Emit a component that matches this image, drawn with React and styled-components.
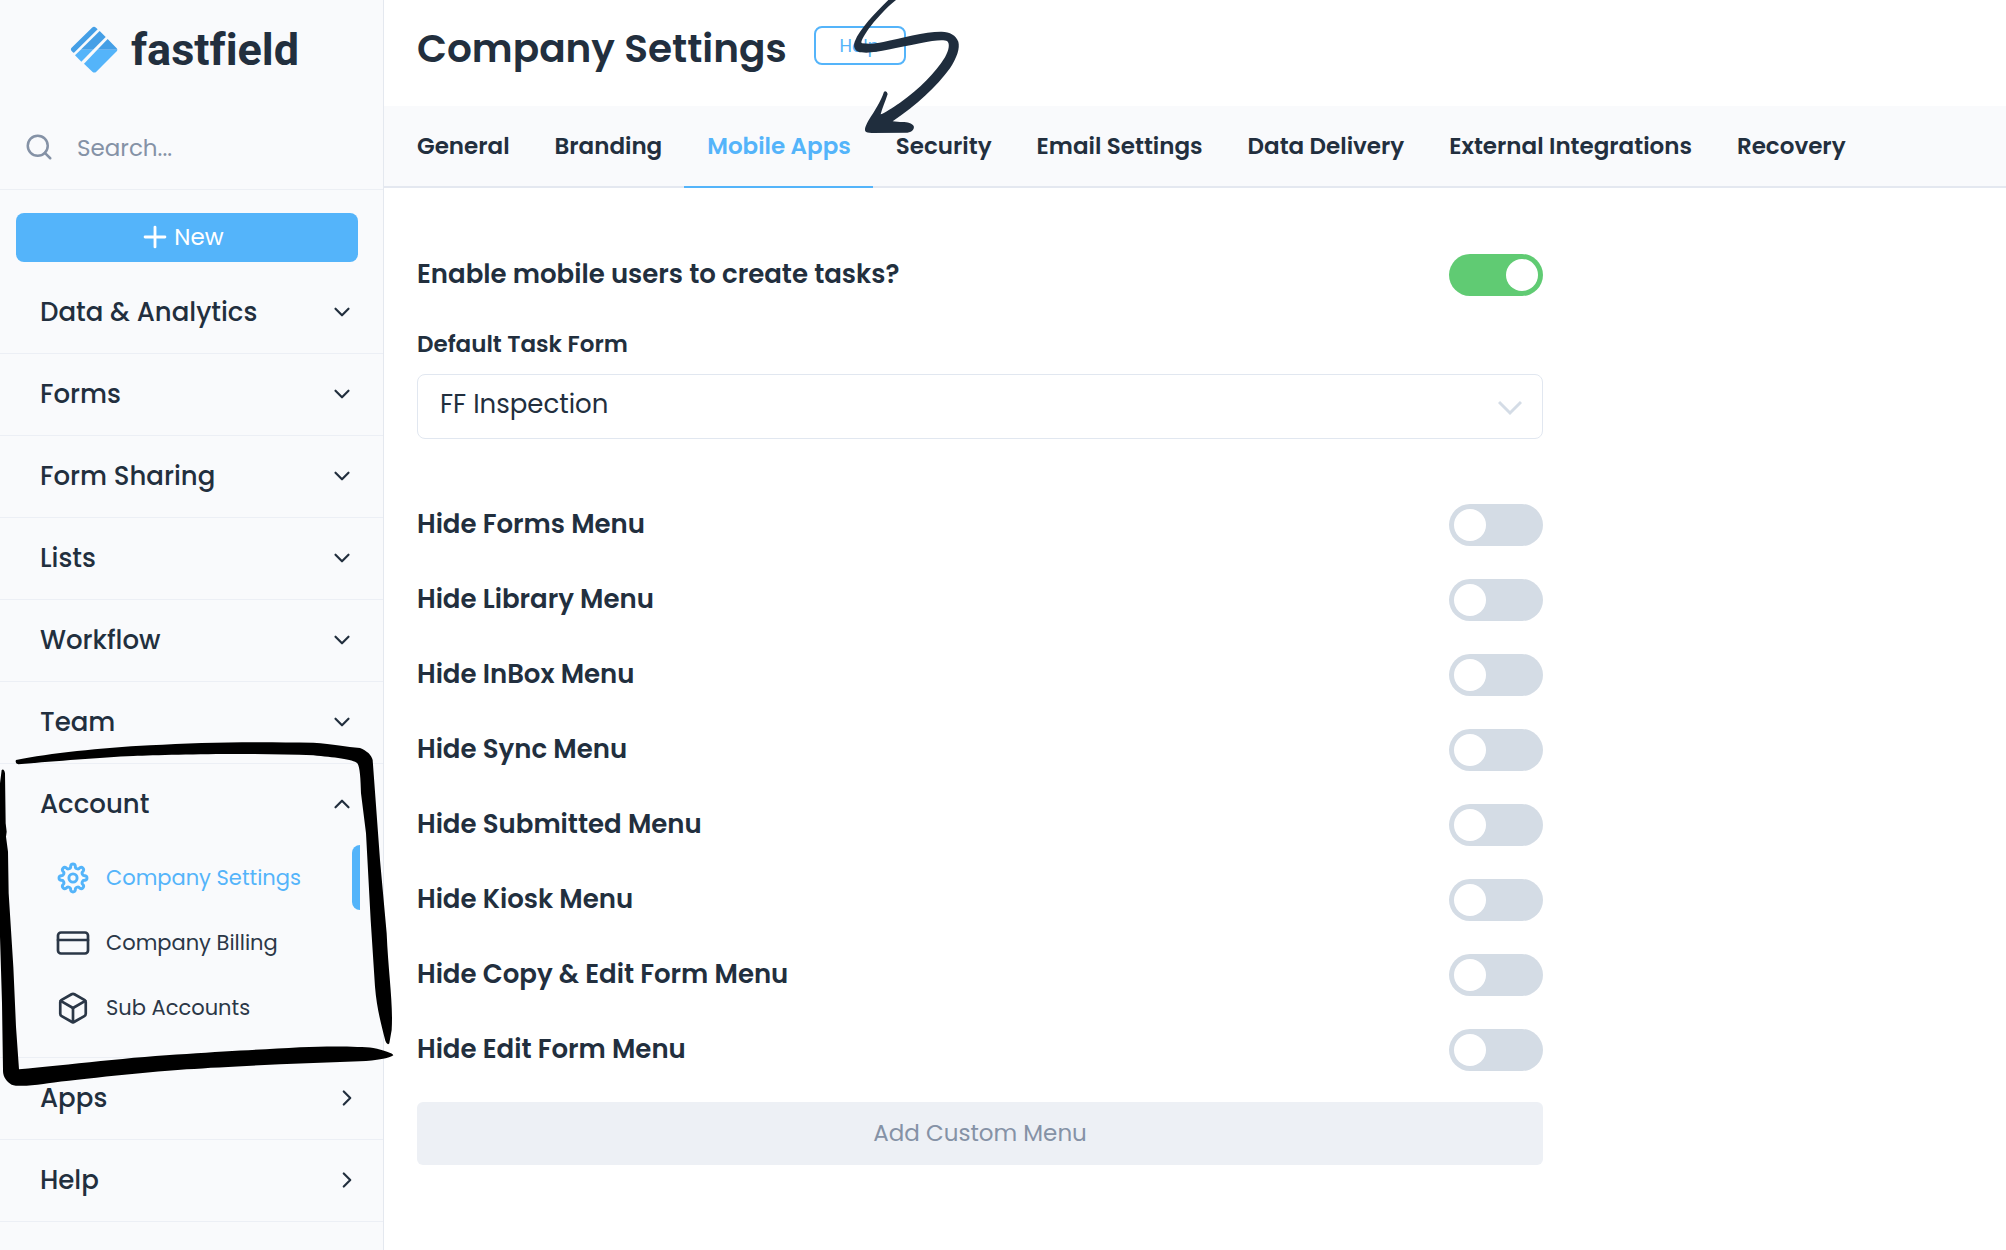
import React, { useState } from "react";
import styled, { createGlobalStyle } from "styled-components";
import {
  Box,
  ChevronDown,
  ChevronRight,
  ChevronUp,
  CreditCard,
  Plus,
  Search,
} from "lucide-react";

const GlobalStyle = createGlobalStyle`
  * {
    box-sizing: border-box;
  }

  body {
    margin: 0;
    background: #ffffff;
    color: #222f3e;
    font-family: Poppins, Inter, sans-serif;
  }

  button, input, select {
    font-family: inherit;
    color: inherit;
  }
`;

const Layout = styled.div`
  display: flex;
  min-height: 100vh;
`;

const Sidebar = styled.aside`
  flex: 0 0 384px;
  min-width: 0;
  background: #f9fafc;
  border-right: 1px solid #e4e8ef;
`;

const Logo = styled.a`
  display: flex;
  align-items: center;
  gap: 13px;
  height: 100px;
  padding-left: 70px;
  color: #222f3e;
  text-decoration: none;
`;

const LogoText = styled.span`
  font-family: Roboto, sans-serif;
  font-size: 45px;
  line-height: 56px;
  font-weight: 700;
  font-variant-ligatures: none;
`;

const SearchBar = styled.label`
  display: flex;
  align-items: center;
  gap: 23px;
  height: 90px;
  padding: 4px 24px 0;
  border-bottom: 1px solid #eceff4;
  color: #8592a6;

  svg {
    flex: none;
  }
`;

const SearchInput = styled.input`
  width: 100%;
  min-width: 0;
  padding: 2px 0 0;
  border: none;
  outline: none;
  background: transparent;
  font-size: 23px;

  &::placeholder {
    color: #8592a6;
    opacity: 1;
  }
`;

const NewButton = styled.button`
  display: flex;
  align-items: center;
  justify-content: center;
  gap: 2px;
  width: 342px;
  height: 49px;
  margin: 23px 16px 10px;
  padding: 0 12px 1px 0;
  border: none;
  border-radius: 8px;
  background: #54b4fa;
  color: #ffffff;
  font-size: 23px;
`;

const Section = styled.section`
  position: relative;
  border-bottom: 1px solid #eceff5;
  padding-bottom: ${(props) => (props.$open ? "17px" : "0")};
`;

const SectionButton = styled.button`
  display: flex;
  align-items: center;
  justify-content: space-between;
  width: 100%;
  height: 81px;
  padding: 0 ${(props) => (props.$closed ? "23px" : "28px")} 1px 40px;
  border: none;
  background: transparent;
  font-size: 26px;
  font-weight: 500;
`;

const SubItem = styled.a`
  display: flex;
  align-items: center;
  gap: 15px;
  height: 65px;
  margin-right: 23px;
  padding-left: 55px;
  color: ${(props) => (props.$active ? "#54b4fa" : "#2b3747")};
  font-size: 21px;
  text-decoration: none;
`;

const IconBox = styled.span`
  display: flex;
  justify-content: center;
  width: 36px;
`;

const ActiveBar = styled.span`
  width: 8px;
  height: 65px;
  margin-left: auto;
  border-radius: 8px 0 0 8px;
  background: #54b4fa;
`;

const BoxSketch = styled.svg`
  position: absolute;
  top: -44px;
  left: 0;
  pointer-events: none;
`;

const Main = styled.main`
  flex: 1;
  min-width: 0;
`;

const Header = styled.header`
  display: flex;
  align-items: center;
  gap: 27px;
  height: 106px;
  padding: 0 33px 8px;
`;

const Title = styled.h1`
  margin: 0;
  font-size: 39px;
  line-height: 60px;
  font-weight: 600;
`;

const HelpWrapper = styled.div`
  position: relative;
  margin-bottom: 7px;
`;

const HelpButton = styled.button`
  display: block;
  width: 92px;
  height: 39px;
  border: 2px solid #54b4fa;
  border-radius: 8px;
  background: #ffffff;
  color: #54b4fa;
  font-size: 18px;
`;

const ArrowSketch = styled.svg`
  position: absolute;
  top: -26px;
  left: 6px;
  pointer-events: none;
`;

const Tabs = styled.nav`
  display: flex;
  height: 82px;
  padding: 0 10px;
  background: #f9fafc;
  box-shadow: inset 0 -2px #e4e8f0;
`;

const Tab = styled.a`
  display: flex;
  align-items: center;
  padding: 0 22px 0 23px;
  border-bottom: 2px solid ${(props) => (props.$active ? "#54b4fa" : "transparent")};
  color: ${(props) => (props.$active ? "#54b4fa" : "#222f3e")};
  font-size: 23px;
  font-weight: 600;
  text-decoration: none;
  white-space: nowrap;
`;

const Form = styled.form`
  max-width: 1192px;
  padding: 49px 33px;
`;

const ToggleRow = styled.label`
  display: flex;
  align-items: center;
  justify-content: space-between;
  height: 75px;
  font-size: 26px;
  font-weight: 600;
`;

const Toggle = styled.input`
  appearance: none;
  width: 94px;
  height: 42px;
  margin: 0;
  border-radius: 21px;
  background: #d4dce5;

  &::before {
    content: "";
    display: block;
    width: 32px;
    height: 32px;
    margin: 5px;
    border-radius: 50%;
    background: #ffffff;
  }

  &:checked {
    background: #60cb73;
  }

  &:checked::before {
    margin-left: 57px;
  }
`;

const FieldLabel = styled.label`
  display: block;
  padding: 17px 0 15px;
  font-size: 23px;
  line-height: 30px;
  font-weight: 600;
`;

const SelectWrapper = styled.div`
  position: relative;
  margin-bottom: 48px;
`;

const Select = styled.select`
  appearance: none;
  display: block;
  width: 100%;
  height: 65px;
  padding: 0 60px 6px 22px;
  border: 1px solid #e1e7f0;
  border-radius: 8px;
  background: #ffffff;
  font-size: 26px;
`;

const SelectArrow = styled.svg`
  position: absolute;
  top: 26px;
  right: 21px;
  pointer-events: none;
`;

const AddButton = styled.button`
  width: 100%;
  height: 63px;
  margin-top: 15px;
  padding-bottom: 3px;
  border: none;
  border-radius: 6px;
  background: #edf0f5;
  color: #8592a6;
  font-size: 23px;
`;

const sections = ["Data & Analytics", "Forms", "Form Sharing", "Lists", "Workflow", "Team"];

const tabs = [
  "General",
  "Branding",
  "Mobile Apps",
  "Security",
  "Email Settings",
  "Data Delivery",
  "External Integrations",
  "Recovery",
];

const menus = [
  "Hide Forms Menu",
  "Hide Library Menu",
  "Hide InBox Menu",
  "Hide Sync Menu",
  "Hide Submitted Menu",
  "Hide Kiosk Menu",
  "Hide Copy & Edit Form Menu",
  "Hide Edit Form Menu",
];

// eight round teeth, joined by round valleys
const point = (deg) => {
  const rad = (deg * Math.PI) / 180;
  return `${(17 + 12.3 * Math.sin(rad)).toFixed(2)} ${(17 - 12.3 * Math.cos(rad)).toFixed(2)}`;
};

const gearPath =
  `M${point(-11)}` +
  [0, 45, 90, 135, 180, 225, 270, 315]
    .map((a) => `A2.4 2.4 0 0 1 ${point(a + 11)}A2.5 2.5 0 0 0 ${point(a + 34)}`)
    .join("") +
  "Z";

const GearIcon = () => (
  <svg width="34" height="34" viewBox="0 0 34 34" fill="none" stroke="currentColor" strokeWidth="2.9">
    <path d={gearPath} strokeLinejoin="round" />
    <circle cx="17" cy="17" r="4.1" />
  </svg>
);

const LogoIcon = () => (
  <svg width="48" height="48" viewBox="0 0 144 144">
    <path
      fill="#459fe6"
      d="M66 5Q72 0 78 5L83 10L12 80Q10 81 7 77L4 74Q1 70 4 66Z"
    />
    <path fill="#459fe6" d="M89 15L107 33L69 71H32Z" />
    <path fill="#54b4fa" d="M32 71H69L34 107L15 88Z" />
    <path fill="#459fe6" d="M113 39L140 67Q142 69 142 71H82Z" />
    <path fill="#54b4fa" d="M82 71H142Q142 73 140 76L79 137Q73 142 67 137L42 113Z" />
  </svg>
);

const App = () => {
  const [open, setOpen] = useState(true);
  const [canCreate, setCanCreate] = useState(true);
  const [hidden, setHidden] = useState({});

  return (
    <Layout>
      <GlobalStyle />
      <Sidebar>
        <Logo href="#">
          <LogoIcon />
          <LogoText>fastfield</LogoText>
        </Logo>
        <SearchBar>
          <Search size={30} strokeWidth={2} />
          <SearchInput placeholder="Search..." aria-label="Search" />
        </SearchBar>
        <NewButton>
          <Plus size={34} strokeWidth={2} />
          New
        </NewButton>
        {sections.map((name) => (
          <Section key={name}>
            <SectionButton>
              {name}
              <ChevronDown size={26} strokeWidth={2} />
            </SectionButton>
          </Section>
        ))}
        <Section $open={open}>
          <SectionButton onClick={() => setOpen(!open)}>
            Account
            <ChevronUp size={26} strokeWidth={2} />
          </SectionButton>
          {open && <>
            <SubItem href="#" $active>
              <IconBox>
                <GearIcon />
              </IconBox>
              Company Settings
              <ActiveBar />
            </SubItem>
            <SubItem href="#">
              <IconBox>
                <CreditCard size={36} strokeWidth={1.8} />
              </IconBox>
              Company Billing
            </SubItem>
            <SubItem href="#">
              <IconBox>
                <Box size={34} strokeWidth={1.9} />
              </IconBox>
              Sub Accounts
            </SubItem>
          </>}
          <BoxSketch width="400" height="370" viewBox="0 0 1200 1110">
            <path d="M48 120C150 100 300 84 450 76C600 66 760 65 940 68C1000 72 1040 80 1080 84C1100 92 1115 105 1118 120L1140 420L1160 640C1165 760 1180 850 1175 930L1168 970Q1162 978 1156 962C1140 900 1130 860 1125 800L1112 600L1098 340L1083 220C1082 180 1080 140 1072 130C1060 118 1000 112 940 106C750 98 500 104 400 108C300 112 150 125 55 133Q44 130 48 120Z" />
            <path d="M5 150Q12 145 15 160L17 310L20 335L18 350L24 395L26 520L40 740L48 920L57 1048C200 1035 400 1010 560 1002C700 992 800 988 900 982C1000 978 1080 980 1120 984C1150 990 1180 1000 1180 1006C1170 1015 1130 1022 1080 1024C900 1030 700 1038 560 1048C420 1058 200 1082 130 1092C90 1098 50 1100 35 1094C20 1085 8 1070 9 1050L6 850L0 650L0 190Z" />
          </BoxSketch>
        </Section>
        {["Apps", "Help"].map((name) => (
          <Section key={name}>
            <SectionButton $closed>
              {name}
              <ChevronRight size={26} strokeWidth={2} />
            </SectionButton>
          </Section>
        ))}
      </Sidebar>
      <Main>
        <Header>
          <Title>Company Settings</Title>
          <HelpWrapper>
            <HelpButton>Help</HelpButton>
            <ArrowSketch width="180" height="160" viewBox="0 0 540 480">
              <path
                fill="#1f2d3d"
                d="M205 0C165 40 120 85 104 125C98 145 108 156 125 157C160 162 220 145 300 130C340 122 370 118 382 124C390 132 387 150 375 172C345 220 300 265 240 308C215 325 195 338 182 343C186 325 196 305 203 282Q200 270 192 275C182 305 165 330 145 362C137 378 133 385 136 394Q140 399 155 399L262 398C278 396 284 386 281 378C275 368 260 365 240 366L218 364C290 315 350 260 390 205C412 170 420 145 415 125C408 105 390 96 365 95C320 94 240 115 190 126C165 131 150 133 126 130C120 128 130 110 145 88C165 60 200 22 228 0Z"
              />
            </ArrowSketch>
          </HelpWrapper>
        </Header>
        <Tabs>
          {tabs.map((name) => (
            <Tab key={name} href="#" $active={name === "Mobile Apps"}>
              {name}
            </Tab>
          ))}
        </Tabs>
        <Form>
          <ToggleRow>
            Enable mobile users to create tasks?
            <Toggle
              type="checkbox"
              checked={canCreate}
              onChange={(e) => setCanCreate(e.target.checked)}
            />
          </ToggleRow>
          <FieldLabel htmlFor="taskForm">Default Task Form</FieldLabel>
          <SelectWrapper>
            <Select id="taskForm">
              <option>FF Inspection</option>
            </Select>
            <SelectArrow width="24" height="16" viewBox="0 0 24 16" fill="none" stroke="#d4dce6" strokeWidth="3">
              <path d="M1 2L12 13L23 2" />
            </SelectArrow>
          </SelectWrapper>
          {menus.map((name) => (
            <ToggleRow key={name}>
              {name}
              <Toggle
                type="checkbox"
                checked={!!hidden[name]}
                onChange={(e) => setHidden({ ...hidden, [name]: e.target.checked })}
              />
            </ToggleRow>
          ))}
          <AddButton type="button">Add Custom Menu</AddButton>
        </Form>
      </Main>
    </Layout>
  );
};

export default App;
